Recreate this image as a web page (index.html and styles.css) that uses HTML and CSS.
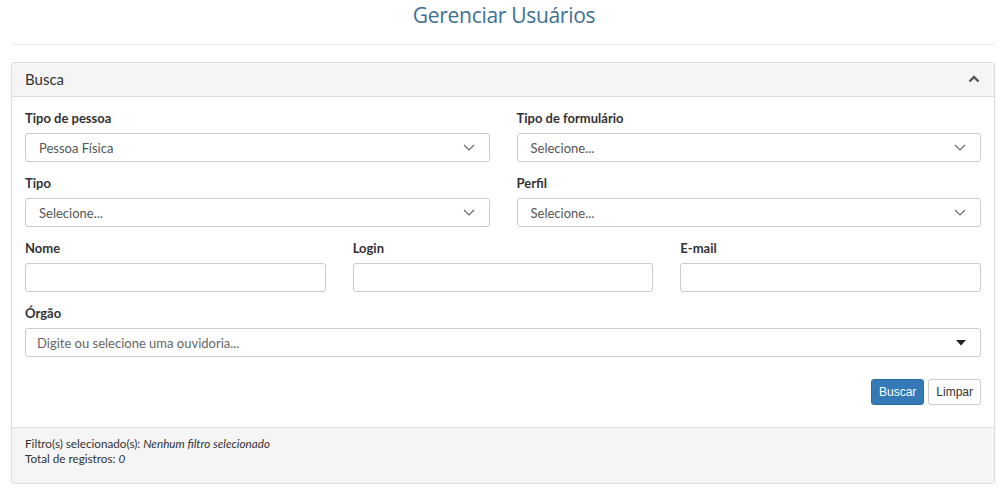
FILE: index.html
```html
<!DOCTYPE html>
<html lang="pt-BR">
<head>
<meta charset="utf-8">
<title>Gerenciar Usuários</title>
<link rel="stylesheet" href="styles.css">
</head>
<body>
<div class="page">
  <h1 class="title">Gerenciar Usuários</h1>
  <hr class="sep">
  <div class="panel">
    <div class="panel-head">
      <span>Busca</span>
      <svg class="chev" width="12" height="8" viewBox="0 0 12 8"><path d="M1.5 6.5 L6 2 L10.5 6.5" fill="none" stroke="#555" stroke-width="2.4"/></svg>
    </div>
    <div class="panel-body">
      <div class="row two">
        <div class="field">
          <label>Tipo de pessoa</label>
          <div class="control select"><span class="val">Pessoa Física</span><svg class="down" width="12" height="7" viewBox="0 0 12 7"><path d="M1 1 L6 6 L11 1" fill="none" stroke="#666" stroke-width="1.1"/></svg></div>
        </div>
        <div class="field">
          <label>Tipo de formulário</label>
          <div class="control select"><span class="val">Selecione...</span><svg class="down" width="12" height="7" viewBox="0 0 12 7"><path d="M1 1 L6 6 L11 1" fill="none" stroke="#666" stroke-width="1.1"/></svg></div>
        </div>
      </div>
      <div class="row two">
        <div class="field">
          <label>Tipo</label>
          <div class="control select"><span class="val">Selecione...</span><svg class="down" width="12" height="7" viewBox="0 0 12 7"><path d="M1 1 L6 6 L11 1" fill="none" stroke="#666" stroke-width="1.1"/></svg></div>
        </div>
        <div class="field">
          <label>Perfil</label>
          <div class="control select"><span class="val">Selecione...</span><svg class="down" width="12" height="7" viewBox="0 0 12 7"><path d="M1 1 L6 6 L11 1" fill="none" stroke="#666" stroke-width="1.1"/></svg></div>
        </div>
      </div>
      <div class="row three">
        <div class="field"><label>Nome</label><div class="control"></div></div>
        <div class="field"><label>Login</label><div class="control"></div></div>
        <div class="field"><label>E-mail</label><div class="control"></div></div>
      </div>
      <div class="row one">
        <div class="field">
          <label>Órgão</label>
          <div class="control select combo"><span class="ph">Digite ou selecione uma ouvidoria...</span><svg class="caret" width="10" height="6" viewBox="0 0 10 6"><path d="M0 0 H10 L5 5.5 Z" fill="#222"/></svg></div>
        </div>
      </div>
      <div class="actions">
        <button class="btn primary">Buscar</button>
        <button class="btn">Limpar</button>
      </div>
    </div>
    <div class="panel-foot">
      <div>Filtro(s) selecionado(s): <em>Nenhum filtro selecionado</em></div>
      <div>Total de registros: <em>0</em></div>
    </div>
  </div>
</div>
</body>
</html>
```
FILE: styles.css
```css
* { box-sizing: border-box; }
html, body { margin: 0; padding: 0; background: #fff; }
body { font-family: "Lato", "Open Sans", sans-serif; color: #333; }
.page { padding: 0 5px 0 11px; }
.title {
  margin: 0;
  padding-top: 2px;
  height: 30px;
  line-height: 26px;
  text-align: center;
  font-family: "Open Sans", sans-serif;
  font-weight: normal;
  font-size: 21px;
  letter-spacing: -0.3px;
  color: #3d7093;
  padding-left: 2px;
}
.sep { border: 0; border-top: 1px solid #eee; margin: 14px 0 17px 0; }
.panel {
  border: 1px solid #ddd;
  border-radius: 3px;
  box-shadow: 0 1px 2px rgba(0,0,0,0.08);
}
.panel-head {
  background: #f5f5f5;
  border-bottom: 1px solid #ddd;
  height: 34px;
  display: flex;
  align-items: center;
  justify-content: space-between;
  padding: 0 14px 2px 13px;
  font-size: 15px;
  color: #333;
}
.chev { margin-top: 1px; }
.panel-body { padding: 13px 13px 22px 13px; }
.row { display: grid; column-gap: 27px; margin-bottom: 13px; }
.row.two { grid-template-columns: 1fr 1fr; }
.row.three { grid-template-columns: 1fr 1fr 1fr; }
.row.one { grid-template-columns: 1fr; }
.field label {
  display: block;
  font-weight: bold;
  font-size: 13px;
  line-height: 16px;
  margin-bottom: 7px;
  color: #333;
}
.control {
  height: 29px;
  border: 1px solid #ccc;
  border-radius: 3px;
  background: #fff;
  display: flex;
  align-items: center;
  justify-content: space-between;
  padding: 0 14px 0 13px;
  font-size: 13px;
  color: #555;
}
.combo { padding: 0 14px 0 11px; }
.combo .ph { color: #666; }
.actions { display: flex; justify-content: flex-end; gap: 4px; margin-top: 22px; }
.btn {
  font-family: "Liberation Sans", Arial, sans-serif;
  font-size: 12px;
  height: 26px;
  padding: 0 7px;
  border: 1px solid #ccc;
  border-radius: 3px;
  background: #fff;
  color: #333;
}
.btn.primary { background: #337ab7; border-color: #2e6da4; color: #fff; }
.panel-foot {
  background: #f5f5f5;
  border-top: 1px solid #ddd;
  padding: 8px 13px 17px 13px;
  font-size: 11.7px;
  line-height: 15px;
  color: #333;
}
```
